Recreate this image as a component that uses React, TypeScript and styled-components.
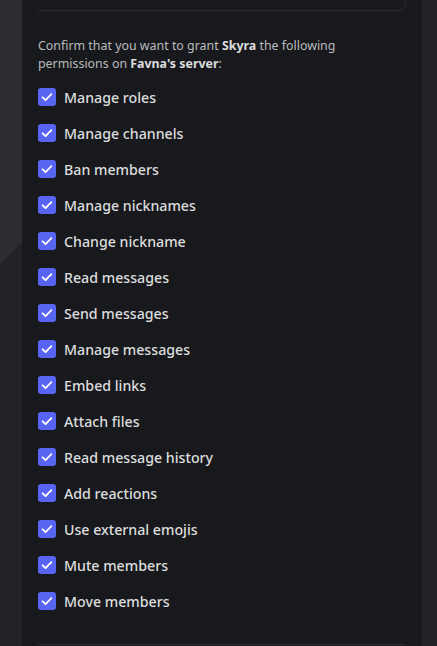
import React from "react";
import styled, { createGlobalStyle } from "styled-components";

const PERMISSIONS = [
  "Manage roles",
  "Manage channels",
  "Ban members",
  "Manage nicknames",
  "Change nickname",
  "Read messages",
  "Send messages",
  "Manage messages",
  "Embed links",
  "Attach files",
  "Read message history",
  "Add reactions",
  "Use external emojis",
  "Mute members",
  "Move members",
];

const GlobalStyle = createGlobalStyle`
  html, body {
    margin: 0;
    padding: 0;
    background: #202225;
    font-family: "Noto Sans", "Open Sans", sans-serif;
  }
`;

const Page = styled.div`
  display: flex;
  height: 646px;
  overflow: hidden;
  background: #202225;
`;

const LeftGutter = styled.div`
  width: 22px;
  flex-shrink: 0;
  background: linear-gradient(135deg, #2c2d31 187px, #202225 187px);
`;

const RightGutter = styled.div`
  flex: 1;
  background: #202225;
`;

const Panel = styled.div`
  width: 400px;
  flex-shrink: 0;
  background: #18191c;
  display: flex;
  flex-direction: column;
  padding: 0 16px;
  box-sizing: border-box;
`;

const CardEdge = styled.div`
  height: 11px;
  border-bottom: 1px solid #2a2c30;
  border-right: 1px solid #2a2c30;
  border-bottom-right-radius: 8px;
  box-sizing: border-box;
`;

const Intro = styled.p`
  margin: 26px 0 12px;
  font-size: 12.4px;
  line-height: 18px;
  color: #b9bbbe;

  strong {
    color: #dcddde;
    font-weight: 700;
  }
`;

const List = styled.div`
  display: flex;
  flex-direction: column;
  gap: 12px;
`;

const Row = styled.label`
  display: flex;
  align-items: center;
  gap: 8px;
  height: 24px;
`;

const Box = styled.span`
  width: 18px;
  height: 18px;
  border-radius: 3px;
  background: #5865f2;
  display: flex;
  align-items: center;
  justify-content: center;
  flex-shrink: 0;
`;

const Label = styled.span`
  font-size: 14.2px;
  font-weight: 500;
  color: #dcddde;
`;

const Footer = styled.div`
  margin-top: auto;
  margin-bottom: 1px;
  border-top: 1px solid #2a2c30;
`;

const Check = () => (
  <svg width="14" height="14" viewBox="0 0 24 24" fill="none">
    <path
      d="M4.5 12.5l5 5L19.5 7"
      stroke="#fff"
      strokeWidth="3"
      strokeLinecap="round"
      strokeLinejoin="round"
    />
  </svg>
);

const App: React.FC = () => {
  return (
    <>
      <GlobalStyle />
      <Page>
        <LeftGutter />
        <Panel>
          <CardEdge />
          <Intro>
            Confirm that you want to grant <strong>Skyra</strong> the following
            permissions on <strong>Favna's server</strong>:
          </Intro>
          <List>
            {PERMISSIONS.map((name) => (
              <Row key={name}>
                <Box>
                  <Check />
                </Box>
                <Label>{name}</Label>
              </Row>
            ))}
          </List>
          <Footer />
        </Panel>
        <RightGutter />
      </Page>
    </>
  );
};

export default App;
